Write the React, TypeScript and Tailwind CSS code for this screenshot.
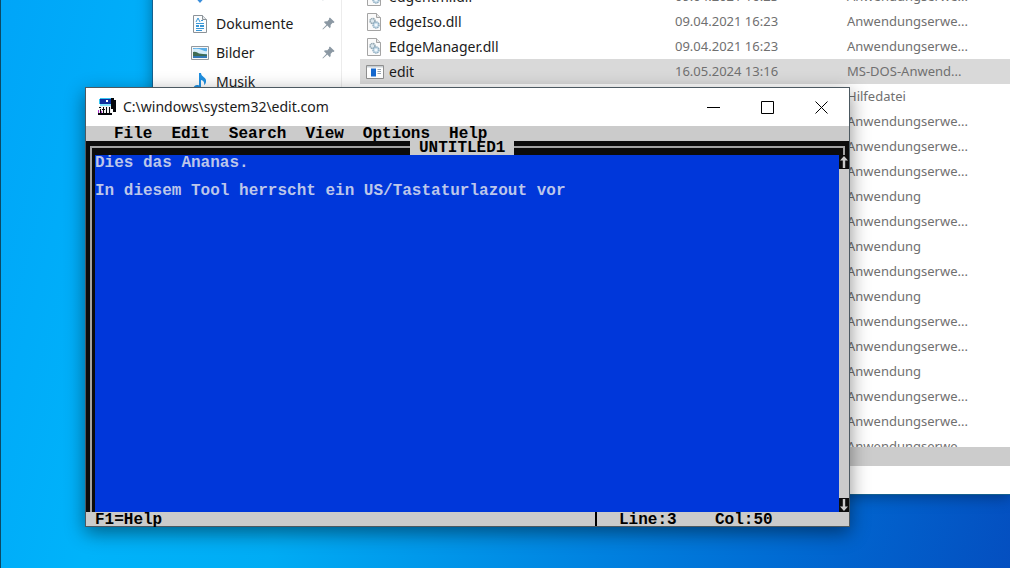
import type { ReactNode } from "react";

interface FileRow {
  name: string;
  date: string;
  type: string;
  icon?: "dll" | "com" | "help";
}

const dllType = "Anwendungserwe...";

const files: FileRow[] = [
  { name: "edgehtml.dll", date: "09.04.2021 16:23", type: dllType, icon: "dll" },
  { name: "edgeIso.dll", date: "09.04.2021 16:23", type: dllType, icon: "dll" },
  { name: "EdgeManager.dll", date: "09.04.2021 16:23", type: dllType, icon: "dll" },
  { name: "edit", date: "16.05.2024 13:16", type: "MS-DOS-Anwend...", icon: "com" },
  { name: "", date: "", type: "Hilfedatei", icon: "help" },
  { name: "", date: "", type: dllType },
  { name: "", date: "", type: dllType },
  { name: "", date: "", type: dllType },
  { name: "", date: "", type: "Anwendung" },
  { name: "", date: "", type: dllType },
  { name: "", date: "", type: "Anwendung" },
  { name: "", date: "", type: dllType },
  { name: "", date: "", type: "Anwendung" },
  { name: "", date: "", type: dllType },
  { name: "", date: "", type: dllType },
  { name: "", date: "", type: "Anwendung" },
  { name: "", date: "", type: dllType },
  { name: "", date: "", type: dllType },
  { name: "", date: "", type: dllType },
];

const menuItems = ["File", "Edit", "Search", "View", "Options", "Help"];

const DownloadIcon = () => (
  <svg viewBox="0 0 18 18" className="size-[18px]">
    <path d="M6 1h6v7h5l-8 9-8-9h5z" fill="#3a8edb" />
  </svg>
);

const DocumentIcon = () => (
  <svg viewBox="0 0 18 18" className="size-[18px]">
    <path d="M2.500.5h9l4 4v13h-13z" fill="#fbfcfd" stroke="#8b9298" />
    <path d="M11.500.5v4h4" fill="#e4e8eb" stroke="#8b9298" />
    <path d="M5 7l2-4 2 4M10 5.500h2M5 8.500h8M5 13.500h8M5 15.500h6" fill="none" stroke="#3a97d6" />
    <path d="M5 10h3v2H5zM9 10h4v2H9z" fill="#3a97d6" />
  </svg>
);

const PictureIcon = () => (
  <svg viewBox="0 0 18 18" className="size-[18px]">
    <path d="M.5 2.500h17v13H.5z" fill="#f8f8f8" stroke="#93999e" />
    <path d="M2 4h14v10H2z" fill="#5aaee8" />
    <path d="M2 5q5-1 9 1t5 1v3H2z" fill="#d3ebf8" />
    <path d="M2 8q3-1 6 1.500l8 1V12H2z" fill="#3f6b54" />
    <path d="M2 12h14v2H2z" fill="#3277b6" />
  </svg>
);

const MusicIcon = () => (
  <svg viewBox="0 0 18 18" className="size-[18px]">
    <path
      d="M8 0h2c0 4 6 4 5 9-.3 1.600-1 2.500-2 3 .8-3-1-4.500-3-5v7c0 2-1.800 3.500-4 3.500S2.500 16.500 2.500 15 4.200 12 6 12c.8 0 1.500.2 2 .4z"
      fill="#1f8fe0"
    />
  </svg>
);

const PinIcon = () => (
  <svg viewBox="0 0 14 14" className="size-[13px]">
    <path
      d="M8.500.5l5 5-1 1-1-.3-2.300 2.300c.4 1.400.1 2.600-.7 3.500L5.700 9.200 1 13.500.5 13l4.300-4.700L2 5.500c.9-.8 2.100-1.100 3.500-.7l2.300-2.300-.3-1z"
      fill="#8b98a3"
    />
  </svg>
);

const DllIcon = () => (
  <svg viewBox="0 0 18 20" className="h-5 w-[18px]">
    <path d="M1.500 1.500h9l4 4v13h-13z" fill="#fafafa" stroke="#a4a4a4" />
    <path d="M10.500 1.500v4h4" fill="#e6e6e6" stroke="#a4a4a4" />
    <circle cx="6.500" cy="9" r="2.500" fill="#dce7ed" stroke="#93a6b1" strokeWidth="1.500" strokeDasharray="1.500 .5" />
    <circle cx="10" cy="13" r="3" fill="#cfe2ee" stroke="#8fadc0" strokeWidth="1.500" strokeDasharray="1.500 .5" />
    <circle cx="10" cy="13" r="1" fill="#fff" />
  </svg>
);

const ComIcon = () => (
  <svg viewBox="0 0 18 20" className="h-5 w-[18px]">
    <path d="M.5 3.500h17v13H.5z" fill="#fff" stroke="#8f8f8f" />
    <path d="M1 4h16v1.500H1z" fill="#c8ced2" />
    <path d="M5 6.500h5v8H5z" fill="#1468cf" />
    <path d="M11.500 7.500H15M11.500 9.500H15M11.500 11.500H15" stroke="#9aa6b0" />
  </svg>
);

const HelpIcon = () => (
  <svg viewBox="0 0 18 20" className="h-5 w-[18px]">
    <circle cx="9" cy="9" r="8" fill="#1f5d94" />
  </svg>
);

const MsDosIcon = () => (
  <svg viewBox="0 0 20 20" className="size-5" shapeRendering="crispEdges">
    <path d="M12 1h5v2h2v12h-3v-3h-2V8h-2z" fill="#05070c" />
    <path d="M3 1h11v1H3zM2 2h1v5H2z" fill="#39c5f2" />
    <path d="M3 2h11v5H3z" fill="#0d2f9d" />
    <path d="M9 3h2v2H9z" fill="#fff" />
    <path d="M3 7h11v2H3z" fill="#7fe3fa" />
    <path d="M2 9h12v7H2z" fill="#f2f2f2" />
    <path d="M2 10h2v1H2zM3 12h1v4H3zM6 10h1v6H6zM5 12h3v1H5zM9 10h1v6H9zM12 10h1v6h-1z" fill="#05070c" />
    <path d="M1 13h1v3H1zM4 14h1v2H4z" fill="#b13ad0" />
    <path d="M1 16h14v2H1z" fill="#05070c" />
  </svg>
);

const ArrowIcon = ({ down = false }: { down?: boolean }) => (
  <svg viewBox="0 0 10 14" className={down ? "h-3.5 w-2.5 rotate-180" : "h-3.5 w-2.5"}>
    <path d="M5 1L9 5.500H6.200V13H3.800V5.500H1z" fill="#cbcbcb" />
  </svg>
);

const fileIcons = { dll: <DllIcon />, com: <ComIcon />, help: <HelpIcon /> };

const SidebarLink = ({ icon, label, pinned = true }: { icon: ReactNode; label: string; pinned?: boolean }) => (
  <a href="#" className="flex h-[29px] items-center pr-[6px] pl-[38px]">
    {icon}
    <span className="ml-[7px] flex-1">{label}</span>
    {pinned && <PinIcon />}
  </a>
);

const Explorer = () => (
  <section className="absolute -top-4 right-0 left-[152px] border-b border-l border-[#14608f] bg-white font-['Noto_Sans','Open_Sans',sans-serif] text-sm text-[#1b1b1b] shadow-[0_2px_14px_rgba(0,0,0,0.35)]">
    <div className="flex h-[463px] overflow-hidden">
      <nav className="-mt-1 w-[189px] shrink-0 border-r border-[#ececec]">
        <SidebarLink icon={<DownloadIcon />} label="Downloads" />
        <SidebarLink icon={<DocumentIcon />} label="Dokumente" />
        <SidebarLink icon={<PictureIcon />} label="Bilder" />
        <SidebarLink icon={<MusicIcon />} label="Musik" pinned={false} />
      </nav>
      <div className="min-w-0 flex-1 pl-[18px]">
        <table className="w-full table-fixed">
          <colgroup>
            <col className="w-[315px]" />
            <col className="w-[172px]" />
            <col />
          </colgroup>
          <tbody>
            {files.map((file, i) => (
              <tr key={i} className={file.name === "edit" ? "h-[25px] bg-[#d9d9d9]" : "h-[25px]"}>
                <td className="p-0">
                  <div className="flex h-[25px] items-center gap-[5px] pl-[6px]">
                    {file.icon && fileIcons[file.icon]}
                    {file.name}
                  </div>
                </td>
                <td className="p-0 text-[13px] text-[#707070]">{file.date}</td>
                <td className="p-0 text-[13px] whitespace-nowrap text-[#707070]">{file.type}</td>
              </tr>
            ))}
          </tbody>
        </table>
      </div>
    </div>
    <div className="h-[19px] bg-[#cccccc]" />
    <div className="h-7" />
  </section>
);

const EditorWindow = () => (
  <main className="absolute top-[87px] left-[85px] w-[765px] border border-[#4c5961] bg-white shadow-[0_6px_18px_rgba(0,0,0,0.45)]">
    <header className="flex h-[38px] items-center pr-px pl-[11px]">
      <MsDosIcon />
      <h1 className="ml-[6px] flex-1 font-['Noto_Sans','Open_Sans',sans-serif] text-sm text-[#1b1b1b]">
        C:\windows\system32\edit.com
      </h1>
      <button aria-label="Minimieren" className="flex h-full w-[54px] items-center justify-center">
        <svg viewBox="0 0 13 13" className="size-[13px]">
          <path d="M0 6.500h13" stroke="#000" />
        </svg>
      </button>
      <button aria-label="Maximieren" className="flex h-full w-[54px] items-center justify-center">
        <svg viewBox="0 0 13 13" className="size-[13px]">
          <path d="M.5.5h12v12H.5z" fill="none" stroke="#000" />
        </svg>
      </button>
      <button aria-label="Schließen" className="flex h-full w-[54px] items-center justify-center">
        <svg viewBox="0 0 13 13" className="size-[13px]">
          <path d="M.5.5l12 12M12.500.5l-12 12" stroke="#000" />
        </svg>
      </button>
    </header>

    <div className="font-['Liberation_Mono',monospace] text-base/[14px] font-bold text-black">
      <nav className="flex h-[15px] gap-[19px] bg-[#cbcbcb] pl-7">
        {menuItems.map((item) => (
          <button key={item}>{item}</button>
        ))}
      </nav>

      <div className="flex h-[14px] bg-[#0c0c0c]">
        <div className="mt-[5px] ml-1 w-80 border-t-2 border-l-2 border-[#a4a4a4]" />
        <h2 className="bg-[#cbcbcb] px-[9px]">UNTITLED1</h2>
        <div className="mt-[5px] mr-1 flex-1 border-t-2 border-r-2 border-[#a4a4a4]" />
      </div>

      <div className="flex h-[357px] bg-[#0c0c0c]">
        <div className="mr-[3px] ml-1 w-0.5 bg-[#a4a4a4]" />
        <textarea
          aria-label="UNTITLED1"
          spellCheck={false}
          className="block flex-1 resize-none overflow-hidden bg-[#0037da] pt-px text-[#bcc6ea] outline-none"
          defaultValue={"Dies das Ananas.\n\nIn diesem Tool herrscht ein US/Tastaturlazout vor"}
        />
        <div className="flex w-2.5 flex-col bg-[#cbcbcb]">
          <button aria-label="Nach oben" className="bg-[#0c0c0c]">
            <ArrowIcon />
          </button>
          <div className="flex-1" />
          <button aria-label="Nach unten" className="bg-[#0c0c0c]">
            <ArrowIcon down />
          </button>
        </div>
      </div>

      <footer className="flex h-[14px] bg-[#cbcbcb] pl-[9px]">
        <span className="flex-1 pt-px">F1=Help</span>
        <span className="box-content w-[96px] border-l-2 border-black pl-[22px]">
          <span className="block pt-px">Line:3</span>
        </span>
        <span className="w-[134px] pt-px">Col:50</span>
      </footer>
    </div>
  </main>
);

const App = () => (
  <div className="relative min-h-screen overflow-hidden border-l border-[#0b4a66] bg-[linear-gradient(105deg,#00a5f8_0%,#00b3fa_20%,#00acf4_36%,#0082e0_64%,#006bd3_80%,#044fc0_100%)]">
    <div className="absolute inset-y-0 right-0 -left-px">
      <Explorer />
      <EditorWindow />
    </div>
  </div>
);

export default App;
